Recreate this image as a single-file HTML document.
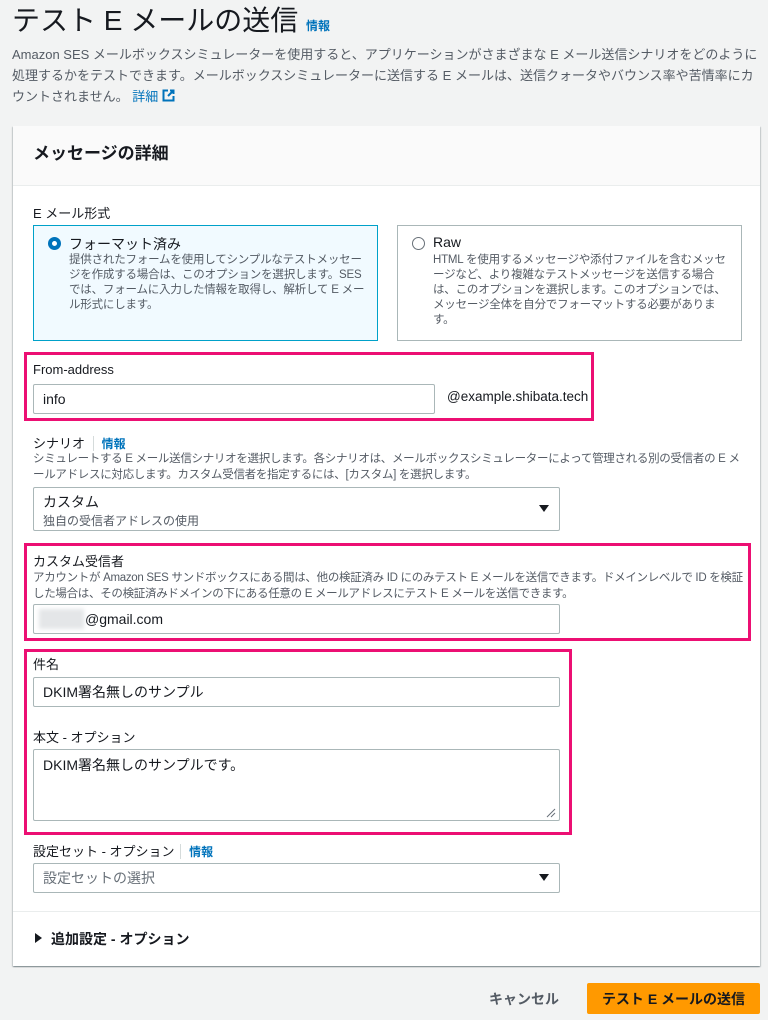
<!DOCTYPE html>
<html><head><meta charset="utf-8"><style>
*{box-sizing:border-box;margin:0;padding:0}
body{width:768px;height:1020px;background:#f2f3f3;font-family:"Liberation Sans","Noto Sans CJK JP",sans-serif;color:#16191f;position:relative;overflow:hidden}
.a{position:absolute;white-space:nowrap}
.lnk{color:#0073bb}
.sec{color:#545b64}
.inp{position:absolute;background:#fff;border:1px solid #aab7b8;border-radius:2px;font-size:14px;padding-left:9px;display:flex;align-items:center}
.pink{position:absolute;border:3px solid #ec0f73}
.tri{position:absolute;width:0;height:0;border-left:5px solid transparent;border-right:5px solid transparent;border-top:7px solid #16191f}
</style></head><body>
<div class="a" style="left:12px;top:3px;font-size:28px;line-height:36px">テスト E メールの送信 <span class="lnk" style="font-size:12px;font-weight:bold">情報</span></div>
<div class="a sec" style="left:12px;top:44px;font-size:13px;line-height:21px;white-space:normal;width:752px">Amazon SES メールボックスシミュレーターを使用すると、アプリケーションがさまざまな E メール送信シナリオをどのように処理するかをテストできます。メールボックスシミュレーターに送信する E メールは、送信クォータやバウンス率や苦情率にカウントされません。 <span class="lnk">詳細 <svg width="13" height="13" viewBox="0 0 13 13" style="vertical-align:-1px"><path d="M6 1.5H1.5v10h10V7M8 1.5h3.5V5M11.5 1.5L6 7" fill="none" stroke="#0073bb" stroke-width="2"/></svg></span></div>

<div style="position:absolute;left:13px;top:126px;width:747px;height:840px;background:#fff;box-shadow:0 1px 1px rgba(0,28,36,.3),1px 1px 1px rgba(0,28,36,.15),-1px 1px 1px rgba(0,28,36,.15)"></div>
<div style="position:absolute;left:13px;top:126px;width:747px;height:60px;background:#fafafa;border-bottom:1px solid #eaeded"></div>
<div class="a" style="left:33px;top:143px;font-size:17px;font-weight:bold;line-height:22px">メッセージの詳細</div>

<div class="a" style="left:33px;top:203px;font-size:13px">E メール形式</div>
<div style="position:absolute;left:33px;top:225px;width:345px;height:116px;background:#f1faff;border:1px solid #00a1c9"></div>
<div style="position:absolute;left:48px;top:237px;width:13px;height:13px;border-radius:50%;border:4px solid #0073bb;background:#fff"></div>
<div class="a" style="left:69px;top:234px;font-size:14px">フォーマット済み</div>
<div class="a sec" style="left:69px;top:253px;font-size:11.5px;line-height:15px;white-space:normal;width:300px;letter-spacing:-0.2px">提供されたフォームを使用してシンプルなテストメッセージを作成する場合は、このオプションを選択します。SES では、フォームに入力した情報を取得し、解析して E メール形式にします。</div>
<div style="position:absolute;left:397px;top:225px;width:345px;height:116px;background:#fff;border:1px solid #aab7b8"></div>
<div style="position:absolute;left:412px;top:237px;width:13px;height:13px;border-radius:50%;border:1px solid #687078;background:#fff"></div>
<div class="a" style="left:433px;top:234px;font-size:14px">Raw</div>
<div class="a sec" style="left:433px;top:253px;font-size:11.5px;line-height:15px;white-space:normal;width:298px;letter-spacing:-0.2px">HTML を使用するメッセージや添付ファイルを含むメッセージなど、より複雑なテストメッセージを送信する場合は、このオプションを選択します。このオプションでは、メッセージ全体を自分でフォーマットする必要があります。</div>

<div class="pink" style="left:24px;top:352px;width:570px;height:69px"></div>
<div class="a" style="left:33px;top:362px;font-size:13px">From-address</div>
<div class="inp" style="left:33px;top:384px;width:402px;height:30px">info</div>
<div class="a" style="left:447px;top:389px;font-size:13.5px">@example.shibata.tech</div>

<div class="a" style="left:33px;top:433px;font-size:13px">シナリオ <span style="border-left:1px solid #d5dbdb;margin-left:4px;padding-left:8px" class="lnk"><b style="font-size:12px">情報</b></span></div>
<div class="a sec" style="left:33px;top:451px;font-size:11.5px;line-height:16px;white-space:normal;width:716px;letter-spacing:-0.3px">シミュレートする E メール送信シナリオを選択します。各シナリオは、メールボックスシミュレーターによって管理される別の受信者の E メールアドレスに対応します。カスタム受信者を指定するには、[カスタム] を選択します。</div>
<div class="inp" style="left:33px;top:487px;width:527px;height:44px;display:block;padding-top:4px">カスタム<div class="sec" style="font-size:12px;margin-top:0px">独自の受信者アドレスの使用</div></div>
<div class="tri" style="left:539px;top:505px"></div>

<div class="pink" style="left:24px;top:543px;width:727px;height:98px"></div>
<div class="a" style="left:33px;top:551px;font-size:13px">カスタム受信者</div>
<div class="a sec" style="left:33px;top:570px;font-size:11.5px;line-height:16px;white-space:normal;width:714px;letter-spacing:-0.3px">アカウントが Amazon SES サンドボックスにある間は、他の検証済み ID にのみテスト E メールを送信できます。ドメインレベルで ID を検証した場合は、その検証済みドメインの下にある任意の E メールアドレスにテスト E メールを送信できます。</div>
<div class="inp" style="left:33px;top:604px;width:527px;height:30px"><span style="display:inline-block;width:45px;height:20px;background:#e4e6e8;filter:blur(2px);margin-right:1px;margin-left:-4px"></span>@gmail.com</div>

<div class="pink" style="left:24px;top:649px;width:548px;height:186px"></div>
<div class="a" style="left:33px;top:654px;font-size:13px">件名</div>
<div class="inp" style="left:33px;top:677px;width:527px;height:30px">DKIM署名無しのサンプル</div>
<div class="a" style="left:33px;top:727px;font-size:13px">本文 - オプション</div>
<div class="inp" style="left:33px;top:749px;width:527px;height:72px;align-items:flex-start;padding-top:5px">DKIM署名無しのサンプルです。</div>
<svg class="a" style="left:546px;top:808px" width="10" height="10"><path d="M1 9L9 1M5 9L9 5" stroke="#687078" stroke-width="1"/></svg>

<div class="a" style="left:33px;top:841px;font-size:13px">設定セット - オプション <span style="border-left:1px solid #d5dbdb;margin-left:2px;padding-left:8px" class="lnk"><b style="font-size:12px">情報</b></span></div>
<div class="inp sec" style="left:33px;top:863px;width:527px;height:30px;color:#687078">設定セットの選択</div>
<div class="tri" style="left:539px;top:874px"></div>

<div style="position:absolute;left:13px;top:911px;width:747px;height:1px;background:#eaeded"></div>
<div style="position:absolute;left:35px;top:933px;width:0;height:0;border-top:5px solid transparent;border-bottom:5px solid transparent;border-left:7px solid #16191f"></div>
<div class="a" style="left:51px;top:929px;font-size:14px;font-weight:bold">追加設定 - オプション</div>

<div class="a sec" style="left:489px;top:989px;font-size:14px;font-weight:bold">キャンセル</div>
<div style="position:absolute;left:587px;top:983px;width:173px;height:31px;background:#ff9900;border-radius:2px;font-size:14px;font-weight:bold;display:flex;align-items:center;justify-content:center">テスト E メールの送信</div>
</body></html>
